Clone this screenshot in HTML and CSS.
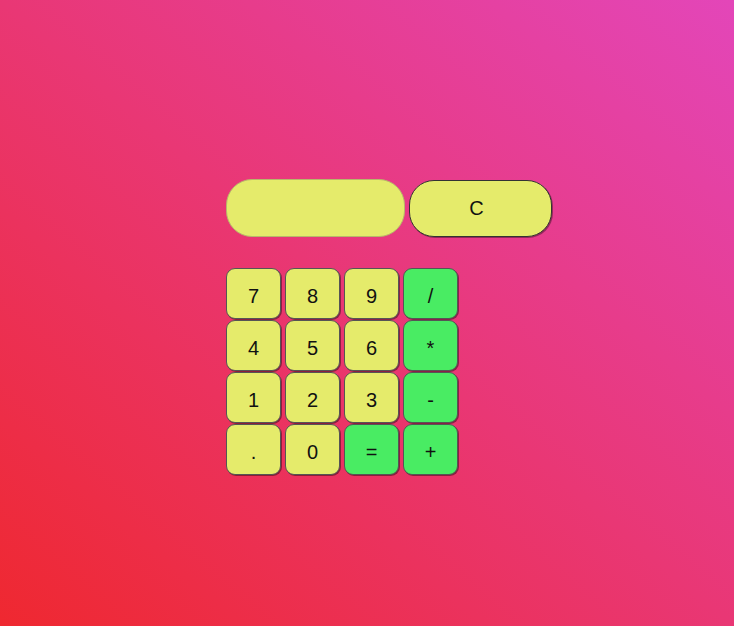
FILE: index.html
```html
<!DOCTYPE html>
<html>
<head>
<meta charset="utf-8">
<link rel="stylesheet" href="styles.css">
</head>
<body>
<div class="calc">
  <div class="top">
    <div class="display"></div>
    <button class="clear">C</button>
  </div>
  <div class="keys">
    <button class="key">7</button><button class="key">8</button><button class="key">9</button><button class="key op">/</button>
    <button class="key">4</button><button class="key">5</button><button class="key">6</button><button class="key op">*</button>
    <button class="key">1</button><button class="key">2</button><button class="key">3</button><button class="key op">-</button>
    <button class="key">.</button><button class="key">0</button><button class="key op">=</button><button class="key op">+</button>
  </div>
</div>
</body>
</html>
```
FILE: styles.css
```css
html, body {
  margin: 0;
  height: 100%;
}
body {
  background: linear-gradient(to top right, #ef2830, #e346b9);
  font-family: "Liberation Sans", Arial, sans-serif;
  padding: 179px 0 0 226px;
  box-sizing: border-box;
}
.calc {
  display: flex;
  flex-direction: column;
  gap: 31px;
}
.top {
  display: flex;
  align-items: center;
  gap: 4px;
}
.display {
  width: 177px;
  height: 56px;
  background: #e5eb6b;
  border: 1px solid #b7b86a;
  border-radius: 26px;
}
.clear {
  width: 143px;
  height: 57px;
  background: #e5eb6b;
  border: 1px solid #333;
  border-radius: 25px;
  font: 20px "Liberation Sans", Arial, sans-serif;
  color: #111;
  box-shadow: 1px 1px 0 rgba(0,0,0,0.35);
  padding: 0 8px 0 0;
}
.keys {
  display: grid;
  grid-template-columns: repeat(4, 55px);
  grid-auto-rows: 51px;
  column-gap: 4px;
  row-gap: 1px;
}
.key {
  background: #e5eb6b;
  border: 1px solid #555;
  border-radius: 9px;
  font: 20px "Liberation Sans", Arial, sans-serif;
  color: #111;
  padding: 5px 0 0 0;
  box-shadow: 1px 1px 0 rgba(0,0,0,0.4);
}
.key.op {
  background: #49ec63;
}
```
